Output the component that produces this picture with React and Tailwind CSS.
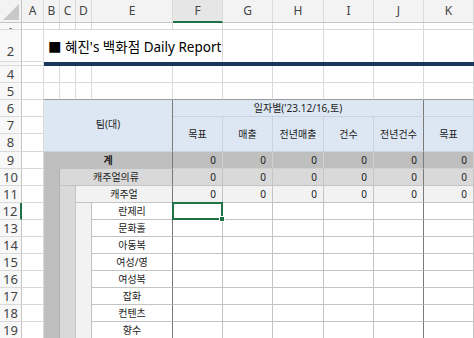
// Excel-style sheet: 혜진's 백화점 Daily Report
const CS = ["", "col-start-1", "col-start-2", "col-start-3", "col-start-4", "col-start-5", "col-start-6", "col-start-7", "col-start-8", "col-start-9", "col-start-10", "col-start-11", "col-start-12"];
const RS = ["", "row-start-1", "row-start-2", "row-start-3", "row-start-4", "row-start-5", "row-start-6", "row-start-7", "row-start-8", "row-start-9", "row-start-10", "row-start-11", "row-start-12", "row-start-13", "row-start-14", "row-start-15", "row-start-16", "row-start-17", "row-start-18", "row-start-19", "row-start-20"];

const LETTERS = ["A", "B", "C", "D", "E", "F", "G", "H", "I", "J", "K"];
const METRICS = ["목표", "매출", "전년매출", "건수", "전년건수"];
const TEAMS = ["란제리", "문화홀", "아동복", "여성/영", "여성복", "잡화", "컨텐츠", "향수"];

const plain = "border-r border-b border-[#d9d9d9] bg-white";

function Cell({ c, r, className = "", children }) {
  return <div className={`${CS[c]} ${RS[r]} ${className}`}>{children}</div>;
}

// sheet row -> grid row
const gr = (n) => n + 1;

function Zeros({ row, bg }) {
  return [7, 8, 9, 10, 11, 12].map((c) => (
    <Cell
      key={c}
      c={c}
      r={gr(row)}
      className={`flex items-center justify-end pr-1.5 border-r border-b border-[#c4c4c4] ${bg} ${c === 11 ? "border-r-[#7a7a7a]" : ""}`}
    >
      0
    </Cell>
  ));
}

export default function App() {
  const cells = [];

  // column headers
  cells.push(
    <Cell key="corner" c={1} r={1} className="relative border-r border-b border-[#c6c6c6] bg-[#f3f3f3]">
      <svg className="absolute right-[2px] bottom-[2px]" width="16" height="16" viewBox="0 0 16 16">
        <polygon points="16,0 16,16 0,16" fill="#c8c8c8" />
      </svg>
    </Cell>
  );
  LETTERS.forEach((l, i) => {
    const sel = l === "F";
    cells.push(
      <Cell
        key={"h" + l}
        c={i + 2}
        r={1}
        className={`flex items-center justify-center text-[12px] text-[#444] border-r border-[#dadada] ${
          sel ? "bg-[#e6e6e6] border-b-2 border-b-[#217346]" : "bg-[#f3f3f3] border-b border-b-[#c6c6c6]"
        }`}
      >
        {l}
      </Cell>
    );
  });

  // row headers
  for (let n = 1; n <= 19; n++) {
    const sel = n === 12;
    let align = "items-center";
    if (n === 1) align = "items-start pt-[3px]";
    if (n === 2) align = "items-end pb-[3px]";
    cells.push(
      <Cell
        key={"r" + n}
        c={1}
        r={gr(n)}
        className={`flex justify-center overflow-hidden text-[13px] leading-none text-[#444] bg-[#f8f8f8] border-b border-[#dadada] ${align} ${
          sel ? "border-r-2 border-r-[#217346]" : "border-r border-r-[#c6c6c6]"
        }`}
      >
        {n === 3 ? "" : n}
      </Cell>
    );
  }

  // column A for every row
  for (let n = 1; n <= 19; n++) {
    cells.push(<Cell key={"a" + n} c={2} r={gr(n)} className={plain} />);
  }

  // row 1, 4, 5
  [1, 4, 5].forEach((n) => {
    for (let c = 3; c <= 12; c++) {
      cells.push(
        <Cell key={`p${n}-${c}`} c={c} r={gr(n)} className={`${plain} ${n === 5 ? "border-b-[#9a9a9a]" : ""}`} />
      );
    }
  });

  // row 2 title
  cells.push(
    <Cell key="title" c={3} r={gr(2)} className="col-span-5 flex items-center whitespace-nowrap pl-1 pt-[2px] bg-white border-r border-[#d9d9d9] text-[13.5px] text-black">
      ■ 혜진's 백화점 Daily Report
    </Cell>
  );
  for (let c = 8; c <= 12; c++) {
    cells.push(<Cell key={"t" + c} c={c} r={gr(2)} className="bg-white border-r border-[#d9d9d9]" />);
  }

  // row 3 navy rule
  cells.push(<Cell key="navy" c={3} r={gr(3)} className="col-span-10 bg-[#1b365d]" />);

  // header block rows 6-8
  cells.push(
    <Cell key="team" c={3} r={gr(6)} className="col-span-4 row-span-3 flex items-center justify-center pb-[2px] bg-[#dde7f3] border-r border-b border-[#c9d3df] border-r-[#7a7a7a]">
      팀(대)
    </Cell>
  );
  cells.push(
    <Cell key="date" c={7} r={gr(6)} className="col-span-5 flex items-center justify-center bg-[#dde7f3] border-r border-b border-[#c9d3df] border-r-[#7a7a7a]">
      일자별('23.12/16,토)
    </Cell>
  );
  cells.push(<Cell key="k6" c={12} r={gr(6)} className="bg-[#dde7f3] border-r border-b border-[#c9d3df]" />);
  [...METRICS, "목표"].forEach((m, i) => (
    cells.push(
      <Cell
        key={"m" + i}
        c={7 + i}
        r={gr(7)}
        className={`row-span-2 flex items-center justify-center bg-[#dde7f3] border-r border-b border-[#c9d3df] ${i === 4 ? "border-r-[#7a7a7a]" : ""}`}
      >
        {m}
      </Cell>
    )
  ));

  // row 9 total
  cells.push(
    <Cell key="sum" c={3} r={gr(9)} className="col-span-4 flex items-center justify-center font-semibold bg-[#bfbfbf] border-r border-b border-[#bfbfbf] border-r-[#7a7a7a]">
      계
    </Cell>
  );
  cells.push(<Zeros key="z9" row={9} bg="bg-[#bfbfbf] border-[#d0d0d0]" />);

  // row 10
  cells.push(<Cell key="b10" c={3} r={gr(10)} className="row-span-10 bg-[#bfbfbf] border-r border-[#b0b0b0]" />);
  cells.push(
    <Cell key="cas1" c={4} r={gr(10)} className="col-span-3 flex items-center justify-center bg-[#d9d9d9] border-r border-b border-[#c4c4c4] border-r-[#7a7a7a]">
      캐주얼의류
    </Cell>
  );
  cells.push(<Zeros key="z10" row={10} bg="bg-[#d9d9d9]" />);

  // row 11
  cells.push(<Cell key="c11" c={4} r={gr(11)} className="row-span-9 bg-[#d9d9d9] border-r border-[#c4c4c4]" />);
  cells.push(
    <Cell key="cas2" c={5} r={gr(11)} className="col-span-2 flex items-center justify-center bg-[#f2f2f2] border-r border-b border-[#c4c4c4] border-r-[#7a7a7a]">
      캐주얼
    </Cell>
  );
  cells.push(<Zeros key="z11" row={11} bg="bg-[#f2f2f2]" />);

  // rows 12-19
  cells.push(<Cell key="d12" c={5} r={gr(12)} className="row-span-8 bg-[#f2f2f2] border-r border-[#c4c4c4]" />);
  TEAMS.forEach((t, i) => {
    const n = 12 + i;
    cells.push(
      <Cell key={"e" + n} c={6} r={gr(n)} className="flex items-center justify-center bg-white border-r border-b border-[#c4c4c4] border-r-[#7a7a7a]">
        {t}
      </Cell>
    );
    for (let c = 7; c <= 12; c++) {
      cells.push(
        <Cell
          key={`d${n}-${c}`}
          c={c}
          r={gr(n)}
          className={`relative bg-white border-r border-b border-[#c4c4c4] ${c === 11 ? "border-r-[#7a7a7a]" : ""}`}
        >
          {n === 12 && c === 7 && (
            <div className="absolute -top-px -left-px -right-px -bottom-px z-10 border-2 border-[#217346]">
              <div className="absolute -right-[4px] -bottom-[4px] w-[6px] h-[6px] bg-[#217346] border border-white" />
            </div>
          )}
        </Cell>
      );
    }
  });

  return (
    <div className="w-[474px] h-[338px] overflow-hidden bg-white font-['Noto_Sans','Noto_Sans_CJK_KR',sans-serif] text-[10px] text-[#222]">
      <div className="grid grid-cols-[22px_22px_16px_16px_16px_81px_50px_50px_51px_50px_50px_50px] grid-rows-[23px_7px_32px_4px_17px_17px_17px_17px_18px_repeat(11,17px)]">
        {cells}
      </div>
    </div>
  );
}
